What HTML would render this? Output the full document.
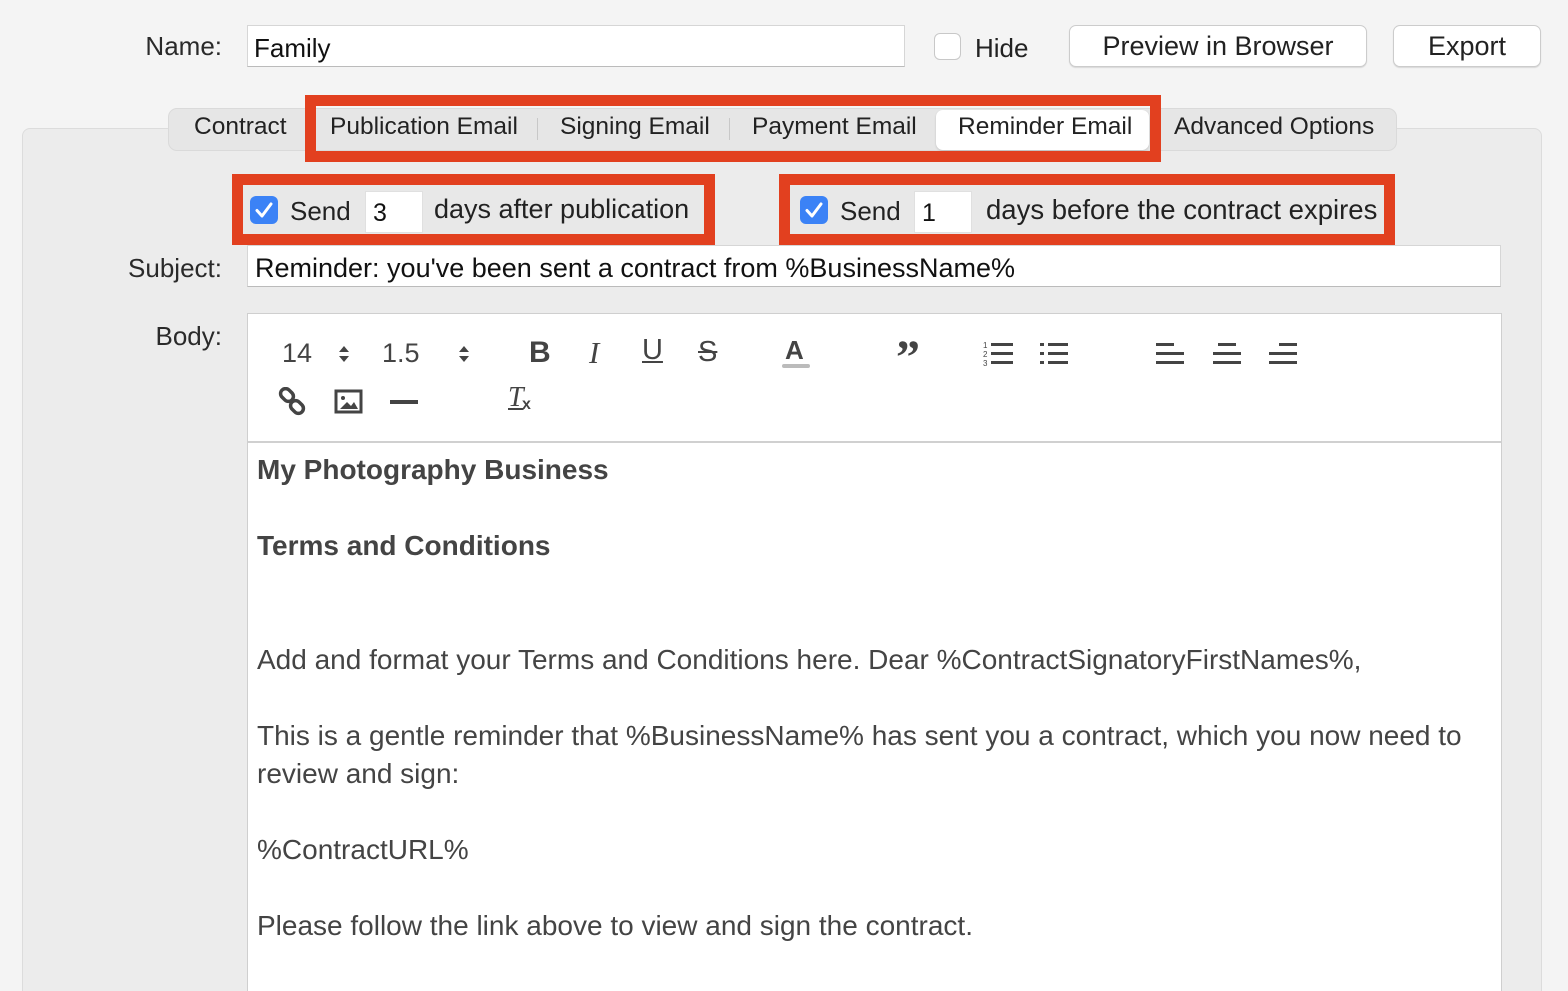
<!DOCTYPE html>
<html style="height:991px;overflow:hidden"><head><meta charset="utf-8"><style>
body{margin:0;width:1568px;height:991px;background:#f4f4f4;font-family:"Liberation Sans",Arial,sans-serif;position:relative;overflow:hidden;color:#222}
.a{position:absolute}
.lbl{font-size:26px;color:#2a2a2a;text-align:right;width:200px}
.field{background:#fff;border:1px solid #d6d6d6;border-bottom-color:#bbb;box-sizing:border-box}
.btn{background:#fff;border:1px solid #ccc;border-radius:7px;box-shadow:0 1px 1px rgba(0,0,0,.12);font-size:27px;text-align:center;line-height:40px;color:#222;box-sizing:border-box}
.red{border:11px solid #e2401f;box-sizing:border-box}
.tab{font-size:24.5px;color:#222;top:113px}
.sep{width:1px;height:22px;background:#c8c8c8;top:118px}
.cb{width:28px;height:28px;border-radius:6px;background:#3b82f6;box-sizing:border-box}
.body{font-size:28px;color:#444;line-height:38px}
.ic{position:absolute}
</style></head><body>
<div class="a lbl" style="left:22px;top:31px">Name:</div>
<div class="a field" style="left:247px;top:25px;width:658px;height:42px"></div>
<div class="a" style="left:254px;top:33px;font-size:26px;color:#111">Family</div>
<div class="a" style="left:934px;top:33px;width:27px;height:27px;border:1px solid #c8c8c8;border-radius:6px;background:#fff;box-sizing:border-box"></div>
<div class="a" style="left:975px;top:33px;font-size:26px">Hide</div>
<div class="a btn" style="left:1069px;top:25px;width:298px;height:42px">Preview in Browser</div>
<div class="a btn" style="left:1393px;top:25px;width:148px;height:42px">Export</div>

<div class="a" style="left:22px;top:128px;width:1520px;height:900px;background:#ececec;border:1px solid #dcdcdc;border-radius:8px;box-sizing:border-box"></div>
<div class="a" style="left:168px;top:108px;width:1229px;height:43px;background:#e6e6e6;border:1px solid #dadada;border-radius:9px;box-sizing:border-box"></div>
<div class="a" style="left:936px;top:110px;width:213px;height:40px;background:#fff;border-radius:7px;box-shadow:0 1px 2px rgba(0,0,0,.15)"></div>
<div class="a tab" style="left:194px">Contract</div>
<div class="a tab" style="left:330px">Publication Email</div>
<div class="a sep" style="left:537px"></div>
<div class="a tab" style="left:560px">Signing Email</div>
<div class="a sep" style="left:729px"></div>
<div class="a tab" style="left:752px">Payment Email</div>
<div class="a tab" style="left:958px">Reminder Email</div>
<div class="a tab" style="left:1174px">Advanced Options</div>
<div class="a red" style="left:305px;top:95px;width:856px;height:67px"></div>

<div class="a" style="left:242px;top:185px;width:462px;height:49px;background:#e8e8e8"></div>
<div class="a cb" style="left:250px;top:196px"></div>
<svg class="a" style="left:250px;top:196px" width="28" height="28"><path d="M7 14.5l5 5.5 9-12" stroke="#fff" stroke-width="3" fill="none" stroke-linecap="round" stroke-linejoin="round"/></svg>
<div class="a" style="left:290px;top:196px;font-size:26px">Send</div>
<div class="a field" style="left:365px;top:191px;width:58px;height:42px;border-color:#e0e0e0"></div>
<div class="a" style="left:373px;top:199px;font-size:25px;color:#111">3</div>
<div class="a" style="left:434px;top:194px;font-size:27px">days after publication</div>
<div class="a red" style="left:232px;top:174px;width:483px;height:71px"></div>

<div class="a" style="left:790px;top:185px;width:594px;height:49px;background:#e8e8e8"></div>
<div class="a cb" style="left:800px;top:196px"></div>
<svg class="a" style="left:800px;top:196px" width="28" height="28"><path d="M7 14.5l5 5.5 9-12" stroke="#fff" stroke-width="3" fill="none" stroke-linecap="round" stroke-linejoin="round"/></svg>
<div class="a" style="left:840px;top:196px;font-size:26px">Send</div>
<div class="a field" style="left:914px;top:191px;width:58px;height:42px;border-color:#e0e0e0"></div>
<div class="a" style="left:922px;top:199px;font-size:25px;color:#111">1</div>
<div class="a" style="left:986px;top:194px;font-size:27.5px">days before the contract expires</div>
<div class="a red" style="left:779px;top:174px;width:616px;height:71px"></div>

<div class="a lbl" style="left:22px;top:253px">Subject:</div>
<div class="a field" style="left:247px;top:245px;width:1254px;height:42px"></div>
<div class="a" style="left:255px;top:253px;font-size:27px;color:#111">Reminder: you've been sent a contract from %BusinessName%</div>

<div class="a lbl" style="left:22px;top:321px">Body:</div>
<div class="a" style="left:247px;top:313px;width:1255px;height:700px;background:#fff;border:1px solid #cfcfcf;box-sizing:border-box"></div>
<div class="a" style="left:248px;top:441px;width:1253px;height:2px;background:#d0d0d0"></div>

<!-- toolbar -->
<div class="a" style="left:282px;top:338px;font-size:27px;color:#444">14</div>
<svg class="ic" style="left:337px;top:343px" width="14" height="22"><path d="M2 9L7 3 12 9Z M2 13L7 19 12 13Z" fill="#444"/></svg>
<div class="a" style="left:382px;top:338px;font-size:27px;color:#444">1.5</div>
<svg class="ic" style="left:457px;top:343px" width="14" height="22"><path d="M2 9L7 3 12 9Z M2 13L7 19 12 13Z" fill="#444"/></svg>
<div class="a" style="left:529px;top:336px;font-size:30px;font-weight:bold;color:#444">B</div>
<div class="a" style="left:589px;top:335px;font-size:31px;font-style:italic;font-family:'Liberation Serif',serif;color:#444">I</div>
<div class="a" style="left:642px;top:334px;font-size:29px;color:#444;text-decoration:underline">U</div>
<div class="a" style="left:698px;top:336px;font-size:29px;color:#444;text-decoration:line-through">S</div>
<div class="a" style="left:785px;top:335px;font-size:26px;color:#444;font-weight:bold">A</div>
<div class="a" style="left:782px;top:364px;width:28px;height:4px;background:#bbb;border-radius:2px"></div>
<div class="a" style="left:896px;top:330px;font-size:48px;font-weight:bold;color:#444;font-family:'Liberation Serif',serif">”</div>
<svg class="ic" style="left:982px;top:340px" width="32" height="28"><g fill="#444"><rect x="9" y="3" width="22" height="3"/><rect x="9" y="12" width="22" height="3"/><rect x="9" y="21" width="22" height="3"/></g><text x="1" y="8" font-size="8" fill="#444" font-family="Liberation Sans">1</text><text x="1" y="17" font-size="8" fill="#444" font-family="Liberation Sans">2</text><text x="1" y="26" font-size="8" fill="#444" font-family="Liberation Sans">3</text></svg>
<svg class="ic" style="left:1039px;top:340px" width="32" height="28"><g fill="#444"><rect x="1" y="3" width="4" height="3"/><rect x="9" y="3" width="20" height="3"/><rect x="1" y="12" width="4" height="3"/><rect x="9" y="12" width="20" height="3"/><rect x="1" y="21" width="4" height="3"/><rect x="9" y="21" width="20" height="3"/></g></svg>
<svg class="ic" style="left:1155px;top:340px" width="30" height="28"><g fill="#444"><rect x="1" y="3" width="18" height="3"/><rect x="1" y="12" width="28" height="3"/><rect x="1" y="21" width="28" height="3"/></g></svg>
<svg class="ic" style="left:1212px;top:340px" width="30" height="28"><g fill="#444"><rect x="6" y="3" width="18" height="3"/><rect x="1" y="12" width="28" height="3"/><rect x="1" y="21" width="28" height="3"/></g></svg>
<svg class="ic" style="left:1268px;top:340px" width="30" height="28"><g fill="#444"><rect x="11" y="3" width="18" height="3"/><rect x="1" y="12" width="28" height="3"/><rect x="1" y="21" width="28" height="3"/></g></svg>
<svg class="ic" style="left:277px;top:387px" width="32" height="32"><g fill="none" stroke="#444" stroke-width="3.5"><rect x="3" y="3" width="14" height="10" rx="5" transform="rotate(45 10 8)"/><rect x="13" y="15" width="14" height="10" rx="5" transform="rotate(45 20 20)"/></g></svg>
<svg class="ic" style="left:334px;top:389px" width="30" height="26"><rect x="2" y="2" width="25" height="21" fill="none" stroke="#444" stroke-width="3"/><circle cx="9" cy="9" r="2" fill="#444"/><path d="M6 20L13 13 17 17 20 13 24 20Z" fill="#444"/></svg>
<div class="a" style="left:390px;top:400px;width:28px;height:4px;background:#444"></div>
<div class="a" style="left:508px;top:382px;font-size:28px;font-style:italic;font-family:'Liberation Serif',serif;color:#444;text-decoration:underline">T</div>
<div class="a" style="left:522px;top:396px;font-size:16px;font-weight:bold;color:#444">x</div>

<div class="a body" style="left:257px;top:451px;width:1235px">
<div style="font-weight:bold">My Photography Business</div>
<div>&nbsp;</div>
<div style="font-weight:bold">Terms and Conditions</div>
<div>&nbsp;</div><div>&nbsp;</div>
<div>Add and format your Terms and Conditions here. Dear %ContractSignatoryFirstNames%,</div>
<div>&nbsp;</div>
<div>This is a gentle reminder that %BusinessName% has sent you a contract, which you now need to<br>review and sign:</div>
<div>&nbsp;</div>
<div>%ContractURL%</div>
<div>&nbsp;</div>
<div>Please follow the link above to view and sign the contract.</div>
</div>
</body></html>
